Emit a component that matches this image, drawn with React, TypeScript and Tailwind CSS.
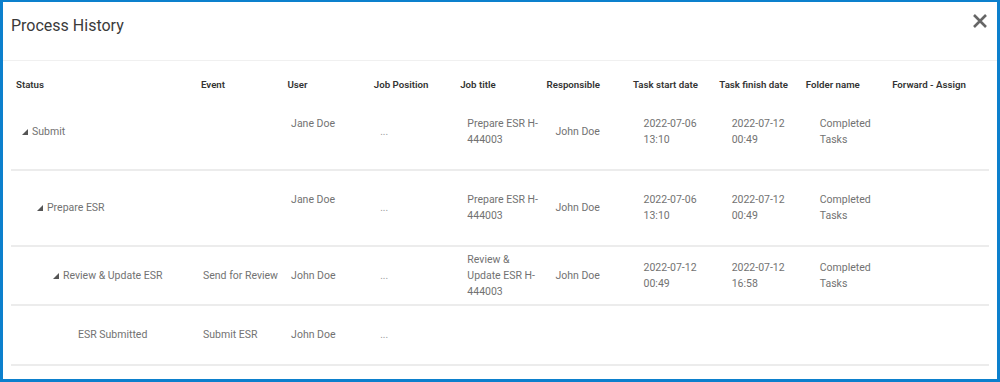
import React from "react";

type Row = {
  level: number;
  leaf?: boolean;
  status: string;
  event: string;
  user: string[];
  pos: string;
  title: string[];
  resp: string;
  start: string[];
  finish: string[];
  folder: string[];
  height: string;
};

const rows: Row[] = [
  {
    level: 0,
    status: "Submit",
    event: "",
    user: ["Jane Doe", "\u00a0"],
    pos: "...",
    title: ["Prepare ESR H-", "444003"],
    resp: "John Doe",
    start: ["2022-07-06", "13:10"],
    finish: ["2022-07-12", "00:49"],
    folder: ["Completed", "Tasks"],
    height: "h-[76px]",
  },
  {
    level: 1,
    status: "Prepare ESR",
    event: "",
    user: ["Jane Doe", "\u00a0"],
    pos: "...",
    title: ["Prepare ESR H-", "444003"],
    resp: "John Doe",
    start: ["2022-07-06", "13:10"],
    finish: ["2022-07-12", "00:49"],
    folder: ["Completed", "Tasks"],
    height: "h-[76px]",
  },
  {
    level: 2,
    status: "Review & Update ESR",
    event: "Send for Review",
    user: ["John Doe"],
    pos: "...",
    title: ["Review &", "Update ESR H-", "444003"],
    resp: "John Doe",
    start: ["2022-07-12", "00:49"],
    finish: ["2022-07-12", "16:58"],
    folder: ["Completed", "Tasks"],
    height: "h-[59px]",
  },
  {
    level: 3,
    leaf: true,
    status: "ESR Submitted",
    event: "Submit ESR",
    user: ["John Doe"],
    pos: "...",
    title: [],
    resp: "",
    start: [],
    finish: [],
    folder: [],
    height: "h-[60px]",
  },
];

const headers = [
  "Status",
  "Event",
  "User",
  "Job Position",
  "Job title",
  "Responsible",
  "Task start date",
  "Task finish date",
  "Folder name",
  "Forward - Assign",
];

const indents = ["pl-[11px]", "pl-[26px]", "pl-[42px]", "pl-[57px]"];

function Lines({ lines }: { lines: string[] }) {
  return (
    <div className="flex flex-col">
      {lines.map((l, i) => (
        <span key={i} className="leading-4">
          {l}
        </span>
      ))}
    </div>
  );
}

function Tri() {
  return (
    <svg width="6" height="6" viewBox="0 0 6 6" className="mr-[4px] mt-[5px]">
      <polygon points="6,0 6,6 0,6" fill="#555" />
    </svg>
  );
}

export default function App() {
  return (
    <div
      className="w-[1000px] h-[382px] bg-white border-t-2 border-b-[3px] border-x-[3px] border-[#0c80cd] flex flex-col"
      style={{ fontFamily: "Roboto, 'Open Sans', sans-serif" }}
    >
      <div className="h-[58px] flex items-start justify-between pl-[8px] pr-[9px] pt-[12px]">
        <span className="text-[16px] leading-6 text-[#3a3a3a]">Process History</span>
        <svg width="16" height="16" viewBox="0 0 16 16" className="mt-[-1px]">
          <path d="M2 2 L14 14 M14 2 L2 14" stroke="#666" strokeWidth="2.6" />
        </svg>
      </div>
      <div className="h-px bg-[#f0f0f0]" />
      <div className="pl-[8px] pr-[8px]">
        <div className="grid grid-cols-[185px_repeat(9,86.4px)] h-[34px] pt-[17px]">
          {headers.map((h) => (
            <div key={h} className="pl-[5px] text-[9.7px] leading-[14px] font-semibold text-[#333] whitespace-nowrap">
              {h}
            </div>
          ))}
        </div>
        <div className="w-[978px]">
          {rows.map((r, i) => (
            <div
              key={i}
              className={`grid grid-cols-[185px_repeat(9,1fr)] items-center border-b-2 border-[#ececec] text-[10.5px] text-[#727272] ${r.height}`}
            >
              <div className={`flex items-start ${indents[r.level]} leading-4`}>
                {r.leaf ? <span className="w-[10px]" /> : <Tri />}
                <span>{r.status}</span>
              </div>
              <div className="pl-[7px] leading-4">{r.event}</div>
              <div className="pl-[7px]">
                <Lines lines={r.user} />
              </div>
              <div className="pl-[8px] text-[10px] text-[#9a9a9a] leading-4">{r.pos}</div>
              <div className="pl-[7px]">
                <Lines lines={r.title} />
              </div>
              <div className="pl-[7px] leading-4">{r.resp}</div>
              <div className="pl-[7px]">
                <Lines lines={r.start} />
              </div>
              <div className="pl-[7px]">
                <Lines lines={r.finish} />
              </div>
              <div className="pl-[7px]">
                <Lines lines={r.folder} />
              </div>
              <div />
            </div>
          ))}
        </div>
      </div>
    </div>
  );
}
